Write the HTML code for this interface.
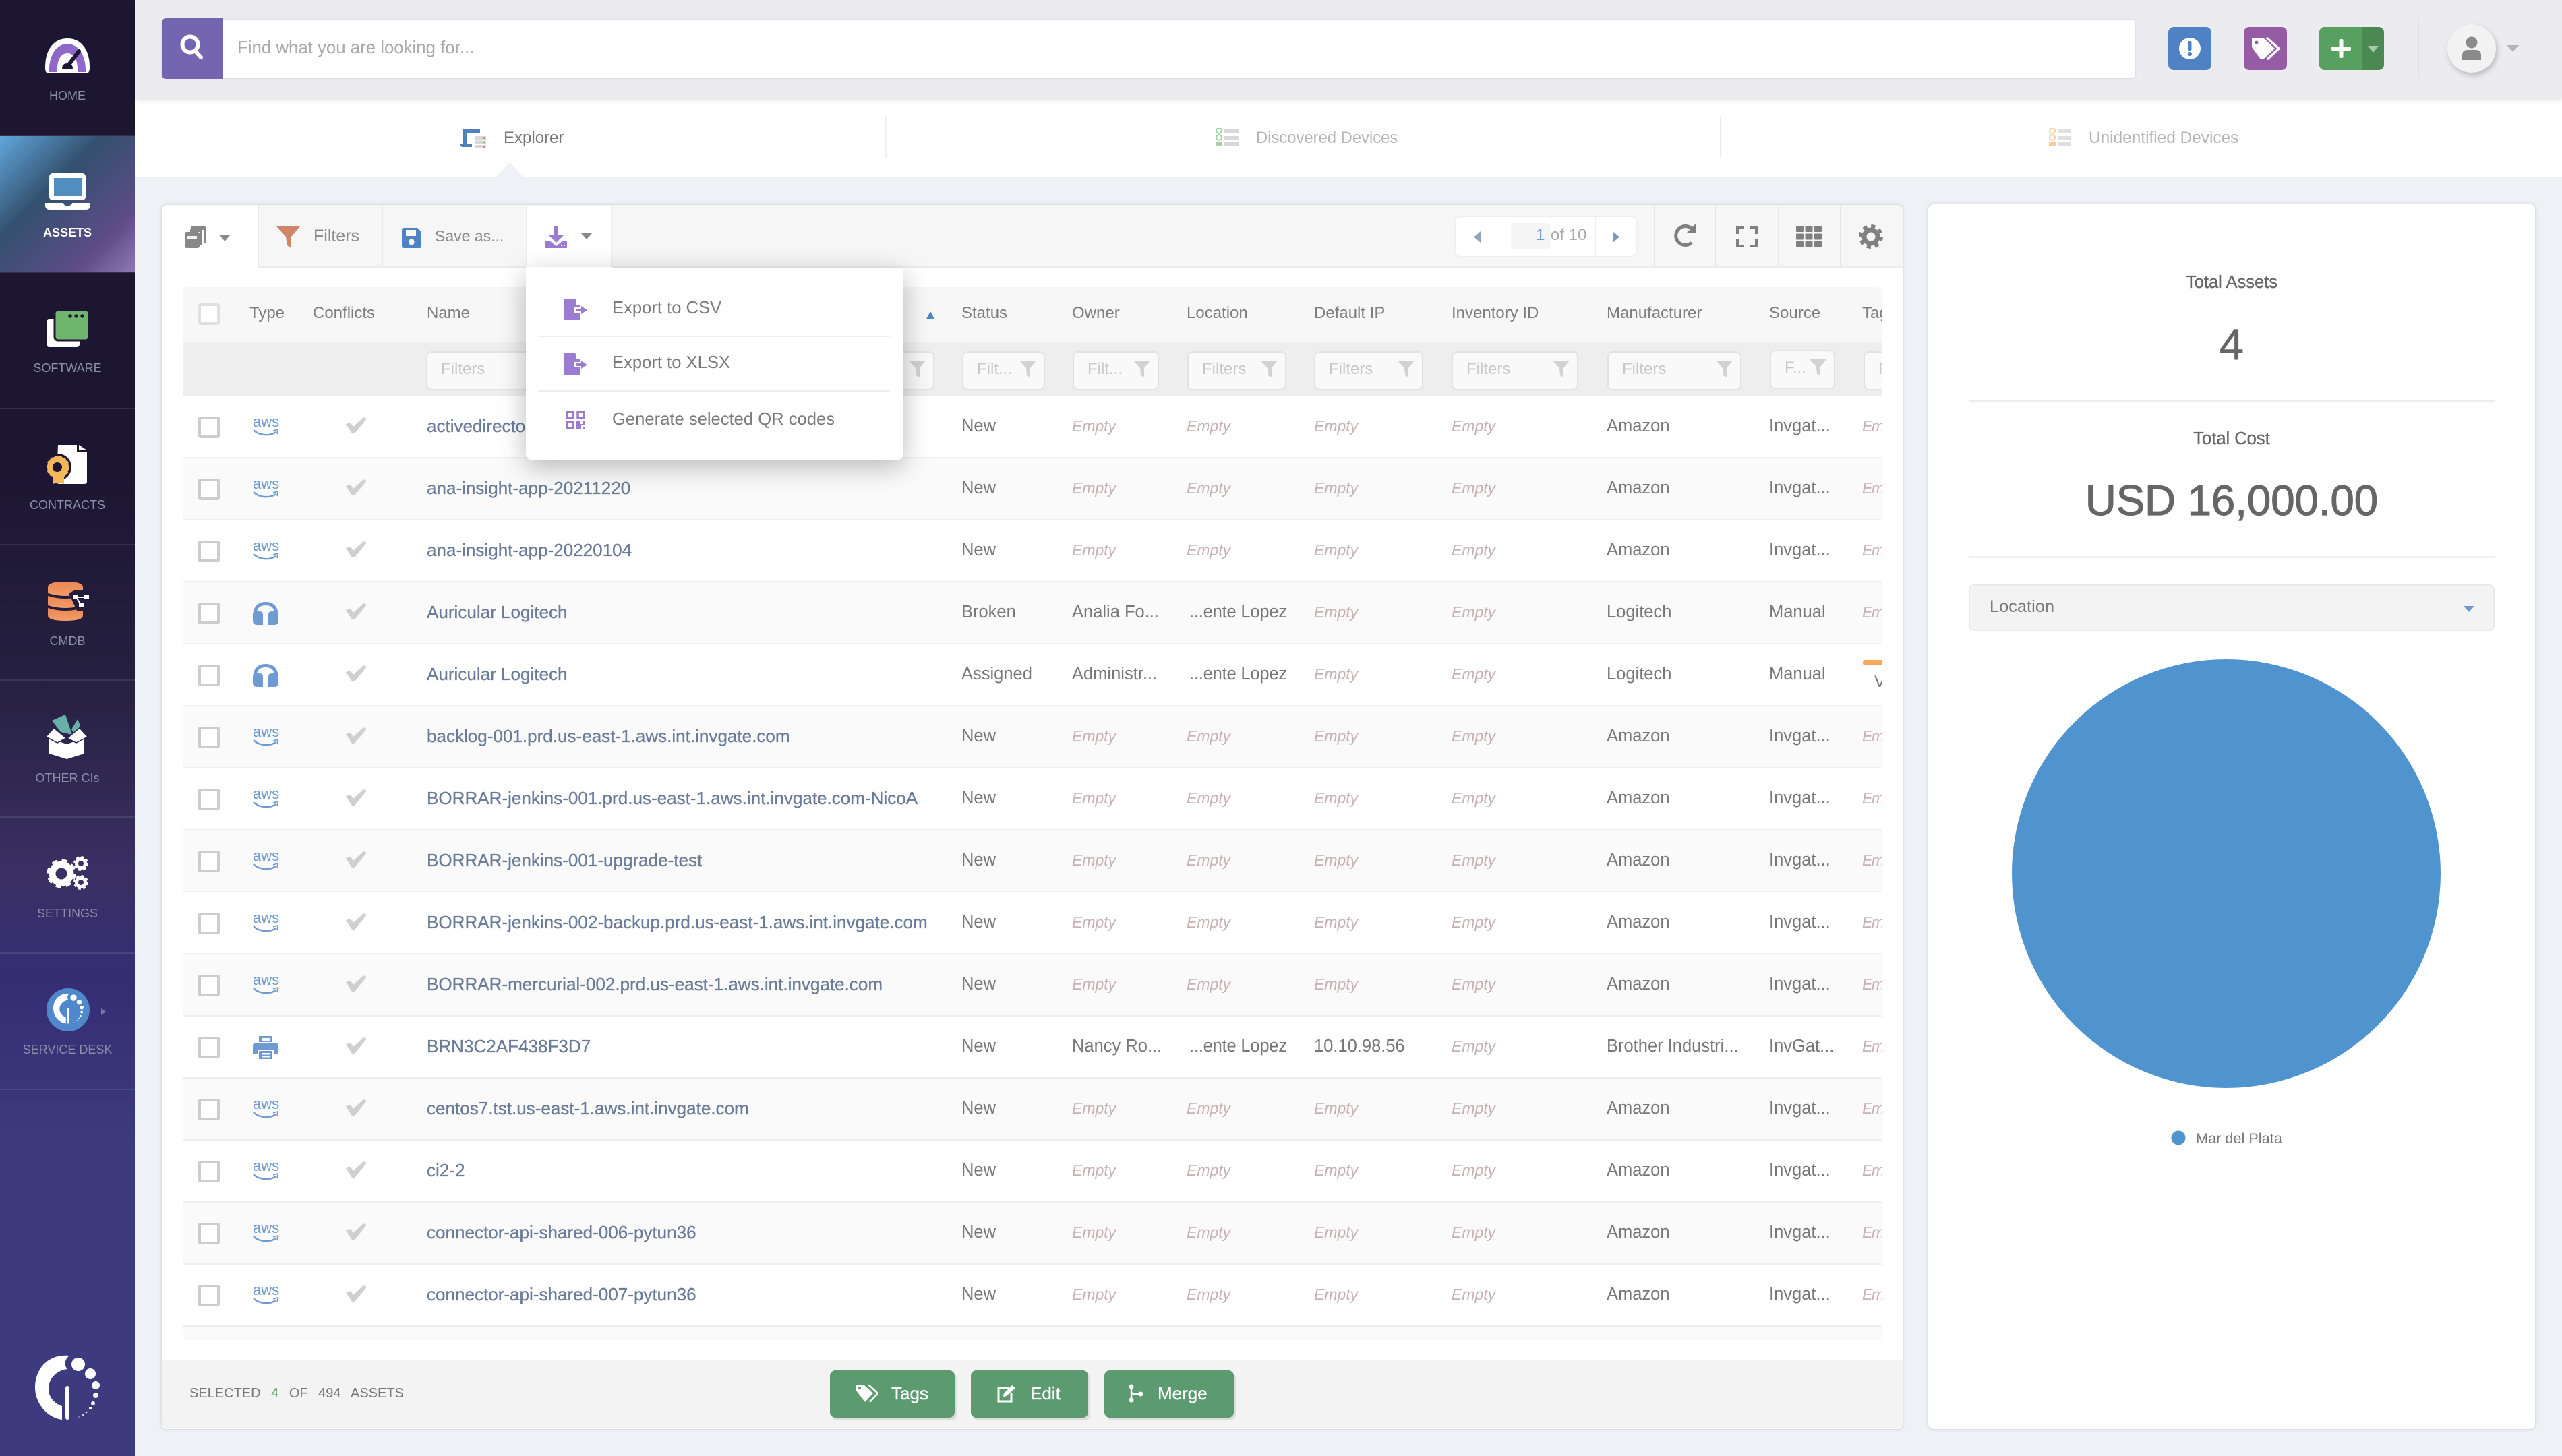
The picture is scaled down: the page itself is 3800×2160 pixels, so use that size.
<!DOCTYPE html>
<html><head><meta charset="utf-8"><title>Assets</title>
<style>
*{box-sizing:border-box}
html,body{margin:0;padding:0}
body{position:relative;width:3800px;height:2160px;overflow:hidden;background:#eef1f5;font-family:"Liberation Sans",sans-serif;color:#777}
.a{position:absolute;white-space:nowrap}
#side{left:0;top:0;width:200px;height:2160px;background:linear-gradient(180deg,#1c1633 0,#1c1633 700px,#262040 1000px,#3a3064 1300px,#352d74 1450px,#3d3a7d 1700px,#3d3a7d 2160px)}
#act{left:0;top:202px;width:200px;height:201px;background:linear-gradient(135deg,#62a6dd 0,#33506e 38%,#5f4c88 78%,#8f79b5 100%)}
.sep{left:0;width:200px;height:2px;background:rgba(255,255,255,.1)}
.lab{left:0;width:200px;text-align:center;font-size:18px;line-height:20px;color:#8a8fa5;font-weight:normal}
#top{left:0;top:0;width:3800px;height:145px;background:#ecebf0;box-shadow:0 3px 8px rgba(0,0,0,.14)}
#tabs{left:200px;top:145px;width:3600px;height:118px;background:#fff}
.tab{font-size:24px;line-height:30px;color:#b5b5b5}
#main{left:240px;top:304px;width:2582px;height:1816px;background:#fff;border-radius:8px;box-shadow:0 0 6px rgba(0,0,0,.16);overflow:hidden}
#right{left:2860px;top:303px;width:900px;height:1817px;background:#fff;border-radius:8px;box-shadow:0 0 6px rgba(0,0,0,.16)}
.tb{font-size:25px;line-height:30px;color:#8a8a8a}
#hd{left:271px;top:426px;width:2521px;height:161px;overflow:hidden;background:#eee;border-radius:8px 8px 0 0}
#hd .h1{position:absolute;left:0;top:0;width:2521px;height:81px;background:#f7f7f7}
#hd span{position:absolute;top:24px;font-size:24px;line-height:30px;color:#7d7d7d;white-space:nowrap}
.f{position:absolute;top:95px;height:58px;background:#f9f9f9;border:2px solid #e2e2e2;border-radius:8px;font-size:24px;line-height:50px;color:#c8c8c8;padding-left:20px;white-space:nowrap;overflow:hidden}
.f svg{position:absolute;right:11px;top:12px;width:25px;height:25px}
#tbl{left:271px;top:588px;width:2521px;height:1400px;overflow:hidden}
.r{position:absolute;left:0;width:2521px;height:92px;background:#fff;border-bottom:2px solid #eee;font-size:25.5px;line-height:88px;color:#777}
.r:nth-child(even){background:#fafafa}
.r>*{position:absolute;top:0;white-space:nowrap}
.r em{font-size:23px;color:#c6b2b6}
.r em.tg{letter-spacing:-1.5px}
.cb{left:23px;top:30px!important;width:32px;height:32px;border:4px solid #cdcdcd;border-radius:3px;background:#fff}
.ty{left:104px;top:29px!important;width:38px;height:34px}
.aws{left:104px;top:0;width:38px;height:92px;font-style:normal;font-size:22px;line-height:76px;color:#6f9ad2;text-align:center}
.aws svg{position:absolute;left:0;top:48px;width:38px;height:12px}
.ck{left:242px;top:31px!important;width:31px;height:24px}
.n{left:362px;color:#6a7b98;-webkit-text-stroke:.3px #6a7b98;font-size:26.05px}
.st{left:1155px}.ow{left:1319px}.lo{left:1489px}.ip{left:1678px}.iv{left:1882px}.mf{left:2112px}.sr{left:2353px}.tg{left:2491px}
.lo2{left:1493px;letter-spacing:-.2px}
.dd{font-size:25.6px;line-height:30px;color:#7a7a7a}
.btn{top:2033px;height:70px;background:#5c9a70;border-radius:8px;box-shadow:3px 4px 0 #dedede;color:#fff;font-size:26px;line-height:68px;-webkit-text-stroke:.3px #fff}
.cen{left:2860px;width:900px;text-align:center;color:#666}
</style></head><body>
<svg width="0" height="0" style="position:absolute"><defs>
<linearGradient id="cm" x1="0" y1="0" x2="0" y2="1"><stop offset="0" stop-color="#ec8652"/><stop offset="1" stop-color="#f29c68"/></linearGradient>
<symbol id="ckm" viewBox="0 0 31 24"><polygon points="0,10 7,8 11,14 26,0 31,2 13,24 9,24" fill="#cfcfcf"/></symbol>
<symbol id="fun" viewBox="0 0 25 25"><polygon points="0,0 25,0 16,11 16,25 11,22 10,11" fill="#d2d2d2"/></symbol>
<symbol id="sm" viewBox="0 0 38 12"><path d="M1 2C10 11 26 11 34 5" fill="none" stroke="#6f9ad2" stroke-width="2.4"/><path d="M30 3L37 1L36 8" fill="none" stroke="#6f9ad2" stroke-width="1.6"/></symbol>
<symbol id="hs" viewBox="0 0 38 34"><path d="M3 19C3 7 10 2.500 19 2.500S35 7 35 19" fill="none" stroke="#6f9ad2" stroke-width="5"/><path d="M0 18Q0 14 5 14H10Q15 14 15 19V34H6Q0 34 0 27ZM38 18Q38 14 33 14H28Q23 14 23 19V34H32Q38 34 38 27Z" fill="#6f9ad2"/></symbol>
<symbol id="pr" viewBox="0 0 38 34"><path d="M9 0H29V9H9ZM3 11H35Q38 11 38 14V26H31V20H7V26H0V14Q0 11 3 11ZM9 22H29V34H9Z" fill="#6f9ad2"/><rect x="13" y="3" width="12" height="4" fill="#fff"/><rect x="13" y="25" width="12" height="2.5" fill="#fff"/><rect x="13" y="29" width="12" height="2.5" fill="#fff"/></symbol>
<symbol id="lg" viewBox="52 2010 96 98"><path d="M103 2011C70 2008 52 2032 52 2058C52 2082 70 2103 92 2106L92 2086C80 2082 72 2072 72 2060C72 2045 84 2033 100 2031C96 2027 94 2018 103 2011Z" fill="#fff"/><rect x="97" y="2056" width="6" height="50" rx="3" fill="#fff"/><circle cx="116" cy="2024" r="10" fill="#fff"/><circle cx="134" cy="2038" r="8" fill="#fff"/><circle cx="142" cy="2055" r="6" fill="#fff"/><circle cx="142" cy="2070" r="4" fill="#fff"/><circle cx="138" cy="2082" r="3" fill="#fff"/><circle cx="134" cy="2089" r="2" fill="#fff"/><circle cx="128" cy="2095" r="1.300" fill="#fff"/><circle cx="123" cy="2099" r="1" fill="#fff"/><circle cx="117" cy="2102" r=".6" fill="#fff"/></symbol>
</defs></svg>

<div class="a" id="side"></div>
<div class="a" id="act"></div>
<div class="a sep" style="top:200px"></div><div class="a sep" style="top:403px"></div><div class="a sep" style="top:605px"></div><div class="a sep" style="top:807px"></div><div class="a sep" style="top:1008px"></div><div class="a sep" style="top:1211px"></div><div class="a sep" style="top:1413px"></div><div class="a sep" style="top:1615px"></div>

<svg class="a" style="left:0;top:0" width="200" height="2160" viewBox="0 0 200 2160">
<path d="M72 109Q67 109 67 100C67 73 80 57 100 57C120 57 133 73 133 100Q133 109 128 109Z" fill="#fff"/>
<path d="M73 107C72 82 84 65 100 65C116 65 128 82 127 107L115 107C116 90 110 79 100 79C90 79 84 90 85 107Z" fill="#9068c8"/>
<path d="M99 100L117 76" stroke="#1c1633" stroke-width="6" stroke-linecap="round"/><path d="M92 102Q92 94 100 94Q108 94 108 102Z" fill="#1c1633"/>
<rect x="73" y="257" width="54" height="40" rx="5" fill="#fff"/><rect x="80" y="264" width="41" height="27" fill="#4f8ebf"/>
<path d="M67 301H134V304Q134 311 127 311H74Q67 311 67 304Z" fill="#fff"/><path d="M94 301H107Q106 305 102 305H98Q95 305 94 301Z" fill="#3e5878"/>
<rect x="69" y="473" width="49" height="42" rx="4" fill="#fff"/><rect x="81" y="460" width="51" height="45" rx="5" fill="#6fb56e" stroke="#1c1633" stroke-width="3"/>
<circle cx="104" cy="469" r="2.700" fill="#1c1633"/><circle cx="113" cy="469" r="2.700" fill="#1c1633"/><circle cx="122" cy="469" r="2.700" fill="#1c1633"/>
<path d="M86 660H114V671H129V714Q129 718 125 718H88Q84 718 84 714Z" fill="#fff"/><path d="M117 660L129 668H117Z" fill="#fff"/>
<circle cx="86" cy="693" r="20" fill="#1c1633"/><path d="M78 705H95V718L86 716L78 718Z" fill="#f3b85a"/><circle cx="86" cy="693" r="16" fill="#f3b85a" stroke="#f3b85a" stroke-dasharray="4 3" stroke-width="2"/><ellipse cx="85" cy="693" rx="7" ry="7" fill="#1c1633"/>
<path d="M71 871Q71 863 97 863Q123 863 123 871V880Q97 888 71 880Z" fill="url(#cm)"/>
<path d="M71 884Q97 892 123 884V898Q97 906 71 898Z" fill="url(#cm)"/>
<path d="M71 902Q97 910 123 902V913Q123 921 97 921Q71 921 71 913Z" fill="url(#cm)"/>
<polygon points="102,880 110,876 135,876 135,902 124,906 114,906" fill="#241c3c"/>
<path d="M113 886H128M113 886L120 897" stroke="#fff" stroke-width="2"/><rect x="109" y="882" width="7" height="7" fill="#fff"/><rect x="125" y="882" width="7" height="7" fill="#fff"/><rect x="117" y="894" width="7" height="7" fill="#fff"/>
<polygon points="77,1069 97,1060 107,1090 90,1086" fill="#67b0a9"/><polygon points="106,1082 115,1067 119,1076 111,1090" fill="#67b0a9"/>
<polygon points="73,1095 99,1104 125,1095 125,1118 99,1126 73,1118" fill="#fff"/>
<polygon points="68,1093 80,1080 98,1095 85,1102" fill="#fff" stroke="#2c2450" stroke-width="1.500"/><polygon points="130,1093 118,1080 100,1095 113,1102" fill="#fff" stroke="#2c2450" stroke-width="1.500"/>
<circle cx="91" cy="1296" r="13.500" fill="none" stroke="#fff" stroke-width="10"/><circle cx="91" cy="1296" r="19" fill="none" stroke="#fff" stroke-width="5" stroke-dasharray="8 7"/>
<circle cx="120" cy="1281" r="6.500" fill="none" stroke="#fff" stroke-width="5"/><circle cx="120" cy="1281" r="9.500" fill="none" stroke="#fff" stroke-width="3" stroke-dasharray="4 3.500"/>
<circle cx="120" cy="1309" r="6.500" fill="none" stroke="#fff" stroke-width="5"/><circle cx="120" cy="1309" r="9.500" fill="none" stroke="#fff" stroke-width="3" stroke-dasharray="4 3.500"/>
<circle cx="101" cy="1498" r="32" fill="#4f88cb"/>
<use href="#lg" x="79" y="1473" width="45" height="47"/>
<polygon points="150,1496 157,1501 150,1506" fill="#7b76a8"/>
<use href="#lg" x="52" y="2010" width="96" height="98"/>
</svg>
<div class="a lab" style="top:132px">HOME</div>
<div class="a lab" style="top:335px;color:#fff;font-weight:bold">ASSETS</div>
<div class="a lab" style="top:536px">SOFTWARE</div>
<div class="a lab" style="top:739px">CONTRACTS</div>
<div class="a lab" style="top:941px">CMDB</div>
<div class="a lab" style="top:1144px">OTHER CIs</div>
<div class="a lab" style="top:1345px">SETTINGS</div>
<div class="a lab" style="top:1547px">SERVICE DESK</div>

<div class="a" id="tabs"></div>
<div class="a" id="top" style="left:200px;width:3600px"></div>
<div class="a" style="left:240px;top:29px;width:2927px;height:87px;background:#fff;border-radius:6px;box-shadow:0 0 2px rgba(0,0,0,.15)"></div>
<div class="a" style="left:240px;top:27px;width:91px;height:90px;background:#7465b0;border-radius:6px 0 0 6px"></div>
<svg class="a" style="left:262px;top:48px" width="42" height="42" viewBox="0 0 42 42"><circle cx="20" cy="18" r="11.500" fill="none" stroke="#fff" stroke-width="6"/><path d="M27 27L36 37" stroke="#fff" stroke-width="6" stroke-linecap="round"/></svg>
<div class="a" style="left:352px;top:56px;font-size:25.800px;line-height:30px;color:#aaa">Find what you are looking for...</div>
<div class="a" style="left:3216px;top:40px;width:64px;height:64px;background:#4f81c5;border-radius:8px"></div>
<svg class="a" style="left:3216px;top:40px" width="64" height="64" viewBox="0 0 64 64"><circle cx="32" cy="32" r="16" fill="#fff"/><rect x="29.500" y="21" width="5" height="14" rx="2" fill="#4f81c5"/><circle cx="32" cy="40" r="3" fill="#4f81c5"/></svg>
<div class="a" style="left:3328px;top:40px;width:64px;height:64px;background:#955ba5;border-radius:8px"></div>
<svg class="a" style="left:3328px;top:40px" width="64" height="64" viewBox="0 0 64 64"><path d="M12 16H29L46 32L29 48H25L12 30Z" fill="#fff"/><circle cx="19" cy="23" r="2.500" fill="#955ba5"/><path d="M34 16L52 32L35 48" fill="none" stroke="#fff" stroke-width="3.500"/></svg>
<div class="a" style="left:3440px;top:40px;width:96px;height:64px;background:#4a8a52;border-radius:8px"></div>
<div class="a" style="left:3440px;top:40px;width:64px;height:64px;background:#58a05f;border-radius:8px 0 0 8px"></div>
<svg class="a" style="left:3458px;top:58px" width="29" height="28" viewBox="0 0 29 28"><rect x="11.500" y="0" width="6" height="28" rx="2" fill="#fff"/><rect x="0" y="11" width="29" height="6" rx="2" fill="#fff"/></svg>
<svg class="a" style="left:3512px;top:68px" width="16" height="10" viewBox="0 0 16 10"><polygon points="0,0 16,0 8,10" fill="#a9c9ae"/></svg>
<div class="a" style="left:3586px;top:28px;width:2px;height:88px;background:#e0e0e4"></div>
<div class="a" style="left:3630px;top:36px;width:72px;height:72px;border-radius:50%;background:#f2f2f2;box-shadow:2px 4px 8px rgba(0,0,0,.22)"></div>
<svg class="a" style="left:3650px;top:54px" width="32" height="36" viewBox="0 0 32 36"><ellipse cx="16" cy="9" rx="8.500" ry="8.500" fill="#8a8a8a"/><path d="M2 35V28Q2 20 10 20H22Q30 20 30 28V35Z" fill="#8a8a8a"/></svg>
<svg class="a" style="left:3718px;top:67px" width="18" height="10" viewBox="0 0 18 10"><polygon points="0,0 18,0 9,10" fill="#b5b5b8"/></svg>

<div class="a" style="left:1313px;top:174px;width:2px;height:61px;background:#f0f0f0"></div>
<div class="a" style="left:2551px;top:174px;width:2px;height:61px;background:#eaeaea"></div>
<svg class="a" style="left:735px;top:241px" width="42" height="22" viewBox="0 0 42 22"><polygon points="21,0 42,22 0,22" fill="#eef1f5"/></svg>
<svg class="a" style="left:683px;top:190px" width="40" height="30" viewBox="0 0 40 30"><path d="M3 23V5Q3 1 7 1H29V8H9V23ZM0 23H17V28H3Q0 28 0 25Z" fill="#4f81bd"/><rect x="22" y="12" width="16" height="5" fill="#d8d8d8"/><rect x="22" y="18.500" width="16" height="5" fill="#d8d8d8"/><rect x="22" y="25" width="16" height="5" fill="#d8d8d8"/><rect x="34" y="13" width="3" height="3" fill="#d88"/><rect x="34" y="19.500" width="3" height="3" fill="#8c8"/><rect x="34" y="26" width="3" height="3" fill="#d88"/></svg>
<div class="a tab" style="left:747px;top:190px;color:#777">Explorer</div>
<svg class="a" style="left:1803px;top:190px" width="36" height="28" viewBox="0 0 36 28"><circle cx="5" cy="4" r="4" fill="none" stroke="#a4d0a4" stroke-width="2"/><circle cx="5" cy="14" r="4" fill="none" stroke="#a4d0a4" stroke-width="2"/><rect x="0" y="21" width="10" height="6" fill="#a4d0a4"/><rect x="13" y="2" width="22" height="5" fill="#d8d8d8"/><rect x="13" y="12" width="22" height="5" fill="#d8d8d8"/><rect x="13" y="21" width="22" height="6" fill="#d8d8d8"/></svg>
<div class="a tab" style="left:1863px;top:190px;font-size:23.800px">Discovered Devices</div>
<svg class="a" style="left:3039px;top:190px" width="36" height="28" viewBox="0 0 36 28"><circle cx="5" cy="4" r="4" fill="none" stroke="#f6d09c" stroke-width="2"/><circle cx="5" cy="14" r="4" fill="none" stroke="#f6d09c" stroke-width="2"/><rect x="0" y="21" width="10" height="6" fill="#f6d09c"/><rect x="13" y="2" width="20" height="5" fill="#e0e0e0"/><rect x="13" y="12" width="20" height="5" fill="#e0e0e0"/><rect x="13" y="21" width="20" height="6" fill="#e0e0e0"/></svg>
<div class="a tab" style="left:3098px;top:190px;font-size:24.400px">Unidentified Devices</div>

<div class="a" id="main"></div>
<div class="a" style="left:382px;top:304px;width:2440px;height:94px;background:#f6f6f6;border-bottom:3px solid #ececec;border-radius:0 8px 0 0"></div>
<div class="a" style="left:382px;top:304px;width:2px;height:94px;background:#eaeaea"></div>
<div class="a" style="left:566px;top:304px;width:2px;height:94px;background:#eaeaea"></div>
<div class="a" style="left:780px;top:306px;width:128px;height:92px;background:#fff;border-left:2px solid #ededed;border-right:2px solid #ededed"></div>
<svg class="a" style="left:274px;top:336px" width="32" height="32" viewBox="0 0 32 32"><path d="M10 0H29Q32 0 32 3V24H28V5H10Z" fill="#888"/><path d="M8 4H26V28H23V8H8Z" fill="#888"/><rect x="0" y="8" width="22" height="24" rx="3" fill="#888"/><rect x="4" y="14" width="14" height="5" fill="#f3f3f3"/></svg>
<svg class="a" style="left:326px;top:349px" width="15" height="9" viewBox="0 0 15 9"><polygon points="0,0 15,0 7.500,9" fill="#8a8a8a"/></svg>
<svg class="a" style="left:410px;top:336px" width="35" height="32" viewBox="0 0 35 32"><polygon points="0,0 35,0 22,15 22,32 16,28 14,15" fill="#d08468"/></svg>
<div class="a tb" style="left:465px;top:335px">Filters</div>
<svg class="a" style="left:596px;top:338px" width="29" height="30" viewBox="0 0 29 30"><path d="M3 0H23L29 6V27Q29 30 26 30H3Q0 30 0 27V3Q0 0 3 0Z" fill="#4f81c5"/><rect x="6" y="3" width="15" height="9" fill="#f6f6f6"/><ellipse cx="14.500" cy="21" rx="4" ry="5" fill="#f6f6f6"/></svg>
<div class="a tb" style="left:645px;top:335px;font-size:23px">Save as...</div>
<svg class="a" style="left:809px;top:336px" width="32" height="32" viewBox="0 0 32 32"><path d="M13 0H19V13H27L16 24L5 13H13Z" fill="#9b7cd1"/><path d="M0 21H6L16 29L26 21H32V32H0Z" fill="#9b7cd1"/><rect x="23" y="27" width="2" height="2" fill="#fff"/><rect x="27" y="27" width="2" height="2" fill="#fff"/></svg>
<svg class="a" style="left:862px;top:346px" width="16" height="9" viewBox="0 0 16 9"><polygon points="0,0 16,0 8,9" fill="#8a8a8a"/></svg>

<div class="a" style="left:2159px;top:322px;width:268px;height:58px;background:#fff;border-radius:8px;box-shadow:0 0 2px rgba(0,0,0,.1)"></div>
<div class="a" style="left:2220px;top:322px;width:1px;height:58px;background:#eee"></div>
<div class="a" style="left:2366px;top:322px;width:1px;height:58px;background:#eee"></div>
<div class="a" style="left:2241px;top:331px;width:59px;height:39px;background:#f5f5f5;border-radius:6px"></div>
<svg class="a" style="left:2186px;top:343px" width="10" height="17" viewBox="0 0 10 17"><polygon points="10,0 10,17 0,8.500" fill="#8ea5c0"/></svg>
<svg class="a" style="left:2392px;top:343px" width="10" height="17" viewBox="0 0 10 17"><polygon points="0,0 0,17 10,8.500" fill="#7f98b8"/></svg>
<div class="a" style="left:2278px;top:334px;font-size:24px;line-height:30px;color:#7e9cc8">1</div>
<div class="a" style="left:2300px;top:334px;font-size:24px;line-height:30px;color:#aaa">of 10</div>
<div class="a" style="left:2453px;top:306px;width:1px;height:90px;background:#e6e6e6"></div><div class="a" style="left:2544px;top:306px;width:1px;height:90px;background:#e6e6e6"></div><div class="a" style="left:2637px;top:306px;width:1px;height:90px;background:#e6e6e6"></div><div class="a" style="left:2729px;top:306px;width:1px;height:90px;background:#e6e6e6"></div>
<svg class="a" style="left:2481px;top:332px" width="36" height="36" viewBox="0 0 36 36"><path d="M29 8A14 14 0 1 0 28 28" fill="none" stroke="#808080" stroke-width="5"/><polygon points="34,0 34,13 21,13" fill="#808080"/></svg>
<svg class="a" style="left:2575px;top:335px" width="32" height="32" viewBox="0 0 32 32"><path d="M2 12V2H12M20 2H30V12M30 20V30H20M12 30H2V20" fill="none" stroke="#808080" stroke-width="4"/></svg>
<svg class="a" style="left:2664px;top:335px" width="38" height="32" viewBox="0 0 38 32"><g fill="#808080"><rect width="11" height="9" rx="1"/><rect x="13.500" width="11" height="9" rx="1"/><rect x="27" width="11" height="9" rx="1"/><rect y="11.500" width="11" height="9" rx="1"/><rect x="13.500" y="11.500" width="11" height="9" rx="1"/><rect x="27" y="11.500" width="11" height="9" rx="1"/><rect y="23" width="11" height="9" rx="1"/><rect x="13.500" y="23" width="11" height="9" rx="1"/><rect x="27" y="23" width="11" height="9" rx="1"/></g></svg>
<svg class="a" style="left:2757px;top:333px" width="36" height="36" viewBox="0 0 36 36"><circle cx="18" cy="18" r="10" fill="none" stroke="#808080" stroke-width="7"/><circle cx="18" cy="18" r="15" fill="none" stroke="#808080" stroke-width="6" stroke-dasharray="6 5.800"/></svg>

<div class="a" id="hd"><div class="h1"></div>
<b style="position:absolute;left:23px;top:24px;width:32px;height:32px;border:4px solid #e0e0e0;border-radius:3px;background:#fff"></b>
<span style="left:99px">Type</span><span style="left:193px">Conflicts</span><span style="left:362px">Name</span>
<span style="left:1155px">Status</span><span style="left:1319px">Owner</span><span style="left:1489px">Location</span><span style="left:1678px">Default IP</span><span style="left:1882px">Inventory ID</span><span style="left:2112px">Manufacturer</span><span style="left:2353px">Source</span><span style="left:2491px">Tag</span>
<svg style="position:absolute;left:1103px;top:36px" width="12" height="11" viewBox="0 0 12 11"><polygon points="6,0 12,11 0,11" fill="#4f86c8"/></svg>
<div class="f" style="left:361px;width:754px">Filters<svg><use href="#fun"/></svg></div>
<div class="f" style="left:1156px;width:123px">Filt...<svg><use href="#fun"/></svg></div>
<div class="f" style="left:1320px;width:128px">Filt...<svg><use href="#fun"/></svg></div>
<div class="f" style="left:1490px;width:147px">Filters<svg><use href="#fun"/></svg></div>
<div class="f" style="left:1678px;width:162px">Filters<svg><use href="#fun"/></svg></div>
<div class="f" style="left:1882px;width:188px">Filters<svg><use href="#fun"/></svg></div>
<div class="f" style="left:2113px;width:199px">Filters<svg><use href="#fun"/></svg></div>
<div class="f" style="left:2354px;width:97px;top:93px">F...<svg><use href="#fun"/></svg></div>
<div class="f" style="left:2493px;width:60px">F</div>
</div>

<div class="a" id="tbl">
<div class="r" style="top:0"><b class="cb"></b><i class="aws">aws<svg><use href="#sm"/></svg></i><svg class="ck"><use href="#ckm"/></svg><a class="n">activedirectory</a><span class="st">New</span><em class="ow">Empty</em><em class="lo">Empty</em><em class="ip">Empty</em><em class="iv">Empty</em><span class="mf">Amazon</span><span class="sr">Invgat...</span><em class="tg">Em</em></div>
<div class="r" style="top:92px"><b class="cb"></b><i class="aws">aws<svg><use href="#sm"/></svg></i><svg class="ck"><use href="#ckm"/></svg><a class="n">ana-insight-app-20211220</a><span class="st">New</span><em class="ow">Empty</em><em class="lo">Empty</em><em class="ip">Empty</em><em class="iv">Empty</em><span class="mf">Amazon</span><span class="sr">Invgat...</span><em class="tg">Em</em></div>
<div class="r" style="top:184px"><b class="cb"></b><i class="aws">aws<svg><use href="#sm"/></svg></i><svg class="ck"><use href="#ckm"/></svg><a class="n">ana-insight-app-20220104</a><span class="st">New</span><em class="ow">Empty</em><em class="lo">Empty</em><em class="ip">Empty</em><em class="iv">Empty</em><span class="mf">Amazon</span><span class="sr">Invgat...</span><em class="tg">Em</em></div>
<div class="r" style="top:276px"><b class="cb"></b><svg class="ty"><use href="#hs"/></svg><svg class="ck"><use href="#ckm"/></svg><a class="n">Auricular Logitech</a><span class="st">Broken</span><span class="ow">Analia Fo...</span><span class="lo2">...ente Lopez</span><em class="ip">Empty</em><em class="iv">Empty</em><span class="mf">Logitech</span><span class="sr">Manual</span><em class="tg">Em</em></div>
<div class="r" style="top:368px"><b class="cb"></b><svg class="ty"><use href="#hs"/></svg><svg class="ck"><use href="#ckm"/></svg><a class="n">Auricular Logitech</a><span class="st">Assigned</span><span class="ow">Administr...</span><span class="lo2">...ente Lopez</span><em class="ip">Empty</em><em class="iv">Empty</em><span class="mf">Logitech</span><span class="sr">Manual</span><b style="left:2492px;top:23px;width:60px;height:8px;background:#f8a858;border-radius:3px"></b><span style="left:2509px;top:26px;line-height:60px;font-size:24px">V</span></div>
<div class="r" style="top:460px"><b class="cb"></b><i class="aws">aws<svg><use href="#sm"/></svg></i><svg class="ck"><use href="#ckm"/></svg><a class="n">backlog-001.prd.us-east-1.aws.int.invgate.com</a><span class="st">New</span><em class="ow">Empty</em><em class="lo">Empty</em><em class="ip">Empty</em><em class="iv">Empty</em><span class="mf">Amazon</span><span class="sr">Invgat...</span><em class="tg">Em</em></div>
<div class="r" style="top:552px"><b class="cb"></b><i class="aws">aws<svg><use href="#sm"/></svg></i><svg class="ck"><use href="#ckm"/></svg><a class="n">BORRAR-jenkins-001.prd.us-east-1.aws.int.invgate.com-NicoA</a><span class="st">New</span><em class="ow">Empty</em><em class="lo">Empty</em><em class="ip">Empty</em><em class="iv">Empty</em><span class="mf">Amazon</span><span class="sr">Invgat...</span><em class="tg">Em</em></div>
<div class="r" style="top:644px"><b class="cb"></b><i class="aws">aws<svg><use href="#sm"/></svg></i><svg class="ck"><use href="#ckm"/></svg><a class="n">BORRAR-jenkins-001-upgrade-test</a><span class="st">New</span><em class="ow">Empty</em><em class="lo">Empty</em><em class="ip">Empty</em><em class="iv">Empty</em><span class="mf">Amazon</span><span class="sr">Invgat...</span><em class="tg">Em</em></div>
<div class="r" style="top:736px"><b class="cb"></b><i class="aws">aws<svg><use href="#sm"/></svg></i><svg class="ck"><use href="#ckm"/></svg><a class="n">BORRAR-jenkins-002-backup.prd.us-east-1.aws.int.invgate.com</a><span class="st">New</span><em class="ow">Empty</em><em class="lo">Empty</em><em class="ip">Empty</em><em class="iv">Empty</em><span class="mf">Amazon</span><span class="sr">Invgat...</span><em class="tg">Em</em></div>
<div class="r" style="top:828px"><b class="cb"></b><i class="aws">aws<svg><use href="#sm"/></svg></i><svg class="ck"><use href="#ckm"/></svg><a class="n">BORRAR-mercurial-002.prd.us-east-1.aws.int.invgate.com</a><span class="st">New</span><em class="ow">Empty</em><em class="lo">Empty</em><em class="ip">Empty</em><em class="iv">Empty</em><span class="mf">Amazon</span><span class="sr">Invgat...</span><em class="tg">Em</em></div>
<div class="r" style="top:920px"><b class="cb"></b><svg class="ty"><use href="#pr"/></svg><svg class="ck"><use href="#ckm"/></svg><a class="n">BRN3C2AF438F3D7</a><span class="st">New</span><span class="ow">Nancy Ro...</span><span class="lo2">...ente Lopez</span><span class="ip">10.10.98.56</span><em class="iv">Empty</em><span class="mf">Brother Industri...</span><span class="sr">InvGat...</span><em class="tg">Em</em></div>
<div class="r" style="top:1012px"><b class="cb"></b><i class="aws">aws<svg><use href="#sm"/></svg></i><svg class="ck"><use href="#ckm"/></svg><a class="n">centos7.tst.us-east-1.aws.int.invgate.com</a><span class="st">New</span><em class="ow">Empty</em><em class="lo">Empty</em><em class="ip">Empty</em><em class="iv">Empty</em><span class="mf">Amazon</span><span class="sr">Invgat...</span><em class="tg">Em</em></div>
<div class="r" style="top:1104px"><b class="cb"></b><i class="aws">aws<svg><use href="#sm"/></svg></i><svg class="ck"><use href="#ckm"/></svg><a class="n">ci2-2</a><span class="st">New</span><em class="ow">Empty</em><em class="lo">Empty</em><em class="ip">Empty</em><em class="iv">Empty</em><span class="mf">Amazon</span><span class="sr">Invgat...</span><em class="tg">Em</em></div>
<div class="r" style="top:1196px"><b class="cb"></b><i class="aws">aws<svg><use href="#sm"/></svg></i><svg class="ck"><use href="#ckm"/></svg><a class="n">connector-api-shared-006-pytun36</a><span class="st">New</span><em class="ow">Empty</em><em class="lo">Empty</em><em class="ip">Empty</em><em class="iv">Empty</em><span class="mf">Amazon</span><span class="sr">Invgat...</span><em class="tg">Em</em></div>
<div class="r" style="top:1288px"><b class="cb"></b><i class="aws">aws<svg><use href="#sm"/></svg></i><svg class="ck"><use href="#ckm"/></svg><a class="n">connector-api-shared-007-pytun36</a><span class="st">New</span><em class="ow">Empty</em><em class="lo">Empty</em><em class="ip">Empty</em><em class="iv">Empty</em><span class="mf">Amazon</span><span class="sr">Invgat...</span><em class="tg">Em</em></div>
<div class="r" style="top:1380px;height:20px;border:0"></div>
</div>

<div class="a" style="left:780px;top:398px;width:560px;height:284px;background:#fff;border-radius:0 0 8px 8px;box-shadow:0 10px 40px rgba(0,0,0,.28);z-index:10"></div>
<div class="a" style="left:780px;top:396px;width:128px;height:4px;background:#fff;z-index:11"></div>
<div class="a" style="left:800px;top:498px;width:520px;height:2px;background:#eee;z-index:11"></div>
<div class="a" style="left:800px;top:579px;width:520px;height:2px;background:#eee;z-index:11"></div>
<svg class="a" style="left:836px;top:443px;z-index:11" width="35" height="32" viewBox="0 0 35 32"><path d="M0 0H17L24 9V13H16V21H24V32H0Z" fill="#9b7cd1"/><path d="M19 1V9H24Z" fill="#fff"/><path d="M18 15H26V11L35 17L26 23V19H18Z" fill="#9b7cd1"/></svg>
<svg class="a" style="left:836px;top:524px;z-index:11" width="35" height="32" viewBox="0 0 35 32"><path d="M0 0H17L24 9V13H16V21H24V32H0Z" fill="#9b7cd1"/><path d="M19 1V9H24Z" fill="#fff"/><path d="M18 15H26V11L35 17L26 23V19H18Z" fill="#9b7cd1"/></svg>
<svg class="a" style="left:839px;top:609px;z-index:11" width="29" height="28" viewBox="0 0 29 28"><g fill="none" stroke="#9b7cd1" stroke-width="3.500"><rect x="2" y="2" width="9" height="9"/><rect x="18" y="2" width="9" height="9"/><rect x="2" y="17" width="9" height="9"/></g><path d="M16 16H22V20H26V16H29V22H23V28H16ZM26 25H29V28H26Z" fill="#9b7cd1"/></svg>
<div class="a dd" style="left:908px;top:442px;z-index:11">Export to CSV</div>
<div class="a dd" style="left:908px;top:523px;z-index:11">Export to XLSX</div>
<div class="a dd" style="left:908px;top:607px;z-index:11">Generate selected QR codes</div>

<div class="a" style="left:240px;top:2018px;width:2582px;height:100px;background:#f3f3f3;border-radius:0 0 8px 8px"></div>
<div class="a" style="left:281px;top:2055px;font-size:20px;line-height:24px;color:#777;word-spacing:10px">SELECTED <span style="color:#4f9a5f">4</span> OF 494 ASSETS</div>
<div class="a btn" style="left:1231px;width:185px"><span class="a" style="left:91px;top:0">Tags</span></div>
<div class="a btn" style="left:1440px;width:174px"><span class="a" style="left:88px;top:0">Edit</span></div>
<div class="a btn" style="left:1638px;width:192px"><span class="a" style="left:79px;top:0">Merge</span></div>
<svg class="a" style="left:1270px;top:2054px" width="33" height="26" viewBox="0 0 33 26"><path d="M0 0H11L25 13L13 26L0 9Z" fill="#fff"/><circle cx="5" cy="5" r="2" fill="#5c9a70"/><path d="M18 0L32 13L20 26" fill="none" stroke="#fff" stroke-width="2.500"/></svg>
<svg class="a" style="left:1478px;top:2054px" width="29" height="27" viewBox="0 0 29 27"><path d="M19 5H3V25H22V13" fill="none" stroke="#fff" stroke-width="3"/><path d="M10 18L11 13L23 1L28 5L15 17Z" fill="#fff"/></svg>
<svg class="a" style="left:1674px;top:2053px" width="22" height="28" viewBox="0 0 22 28"><circle cx="4" cy="4" r="3.500" fill="#fff"/><circle cx="4" cy="24" r="3.500" fill="#fff"/><circle cx="18" cy="15" r="3.500" fill="#fff"/><path d="M4 4V24M4 13Q6 16 18 15" fill="none" stroke="#fff" stroke-width="2.500"/></svg>

<div class="a" id="right"></div>
<div class="a cen" style="top:404px;font-size:25.500px;line-height:30px;-webkit-text-stroke:.3px #666">Total Assets</div>
<div class="a cen" style="top:471px;font-size:65px;line-height:80px;-webkit-text-stroke:.5px #666">4</div>
<div class="a" style="left:2920px;top:594px;width:780px;height:2px;background:#eee"></div>
<div class="a cen" style="top:636px;font-size:25.500px;line-height:30px;-webkit-text-stroke:.3px #666">Total Cost</div>
<div class="a cen" style="top:703px;font-size:63.500px;line-height:80px;-webkit-text-stroke:1.2px #666">USD 16,000.00</div>
<div class="a" style="left:2920px;top:825px;width:780px;height:3px;background:#f0f0f0"></div>
<div class="a" style="left:2920px;top:867px;width:780px;height:69px;background:#f3f3f3;border:2px solid #e9e9e9;border-radius:8px"></div>
<div class="a" style="left:2951px;top:885px;font-size:25.400px;line-height:30px;color:#777">Location</div>
<svg class="a" style="left:3654px;top:899px" width="16" height="9" viewBox="0 0 16 9"><polygon points="0,0 16,0 8,9" fill="#6f97d0"/></svg>
<svg class="a" style="left:2980px;top:975px" width="644" height="644" viewBox="0 0 644 644"><circle cx="322" cy="321" r="318" fill="#4f94cf"/></svg>
<svg class="a" style="left:3220px;top:1677px" width="22" height="22" viewBox="0 0 22 22"><circle cx="11" cy="11" r="10.500" fill="#4f94cf"/></svg>
<div class="a" style="left:3257px;top:1676px;font-size:21.700px;line-height:26px;color:#777">Mar del Plata</div>
</body></html>
